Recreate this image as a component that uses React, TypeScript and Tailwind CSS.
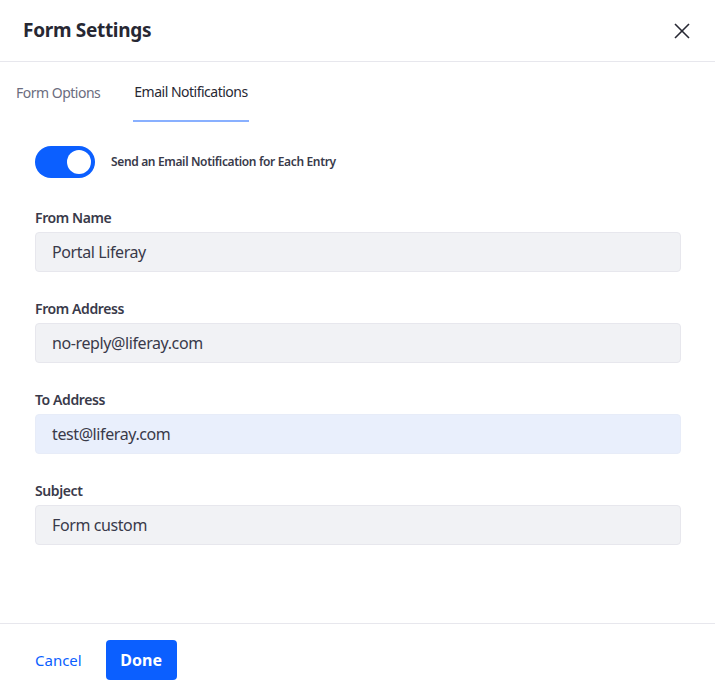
import React from "react";

const fields = [
  { label: "From Name", value: "Portal Liferay", focused: false },
  { label: "From Address", value: "no-reply@liferay.com", focused: false },
  { label: "To Address", value: "test@liferay.com", focused: true },
  { label: "Subject", value: "Form custom", focused: false },
];

export default function App() {
  return (
    <div
      className="w-[715px] h-[693px] bg-white flex flex-col text-[#272833]"
      style={{ fontFamily: '"Noto Sans", "Open Sans", sans-serif' }}
    >
      {/* header */}
      <div className="h-[62px] shrink-0 flex items-center justify-between pl-[23px] pr-[24px] border-b border-[#e7e7ed]">
        <h1 className="text-[19px] font-bold tracking-[-0.3px]">Form Settings</h1>
        <button className="text-[#272833]">
          <svg width="18" height="18" viewBox="0 0 18 18" fill="none" stroke="currentColor" strokeWidth="1.6">
            <line x1="2" y1="2" x2="16" y2="16" />
            <line x1="16" y1="2" x2="2" y2="16" />
          </svg>
        </button>
      </div>

      {/* tabs */}
      <div className="h-[60px] shrink-0 flex pl-4 gap-[33px] text-[14px]">
        <div className="flex items-center text-[#6b6c7e] tracking-[-0.5px]">Form Options</div>
        <div className="flex items-center border-b-2 border-[#89b0ff] px-px tracking-[-0.5px]">
          Email Notifications
        </div>
      </div>

      {/* body */}
      <div className="flex-1 pl-[35px] pr-[34px] pt-6">
        <div className="flex items-center gap-4">
          <div className="w-[60px] h-8 rounded-full bg-[#0b5fff] flex items-center justify-end pr-[4px]">
            <div className="w-6 h-6 rounded-full bg-white" />
          </div>
          <span className="text-[12px] font-semibold tracking-[-0.35px] text-[#393a4a]">
            Send an Email Notification for Each Entry
          </span>
        </div>

        <div className="mt-[30px]">
          {fields.map((f) => (
            <div key={f.label} className="mb-[27px]">
              <div className="text-[14px] font-semibold leading-5 mb-1 tracking-[-0.4px] text-[#393a4a]">
                {f.label}
              </div>
              <div
                className={
                  f.focused
                    ? "h-10 rounded-[4px] border border-[#e7ecf8] bg-[#e9effc] flex items-center px-4 text-[16px] tracking-[-0.4px] text-[#393a4a]"
                    : "h-10 rounded-[4px] border border-[#e7e7ed] bg-[#f1f2f5] flex items-center px-4 text-[16px] tracking-[-0.4px] text-[#393a4a]"
                }
              >
                {f.value}
              </div>
            </div>
          ))}
        </div>
      </div>

      {/* footer */}
      <div className="h-[70px] shrink-0 border-t border-[#e7e7ed] flex items-center gap-6 px-[35px] pt-[3px]">
        <button className="text-[15px] text-[#0b5fff]">Cancel</button>
        <button className="h-10 w-[71px] rounded-[4px] bg-[#0b5fff] text-white text-[16px] font-bold">Done</button>
      </div>
    </div>
  );
}
